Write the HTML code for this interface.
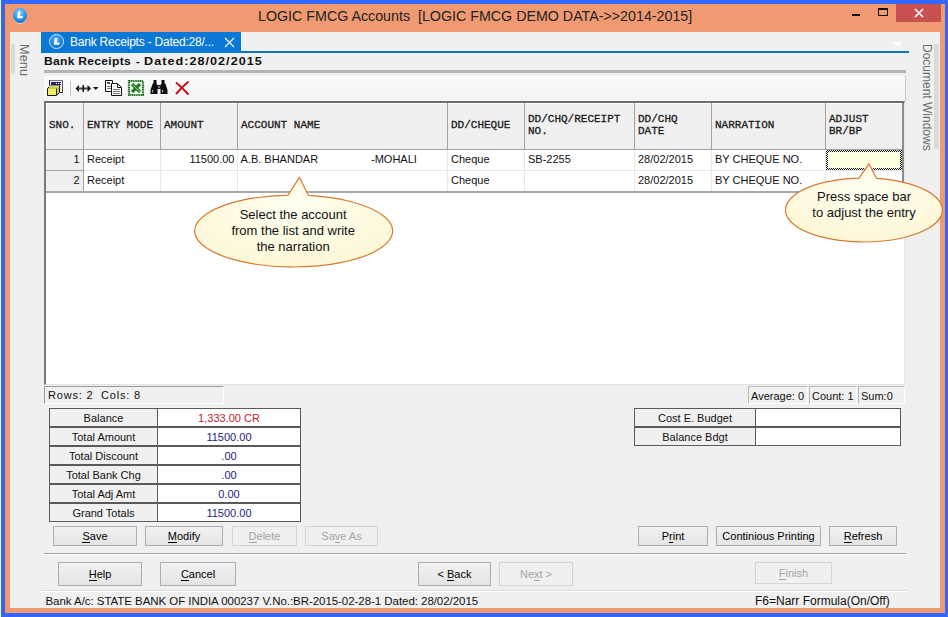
<!DOCTYPE html>
<html><head><meta charset="utf-8">
<style>
*{margin:0;padding:0;box-sizing:border-box}
html,body{width:948px;height:617px;overflow:hidden;background:#3366fb}
body{position:relative;font-family:"Liberation Sans",sans-serif;font-size:11px;color:#000}
.a{position:absolute}
.mono{font-family:"Liberation Mono",monospace;font-weight:normal;font-size:11px;color:#1a1a1a;-webkit-text-stroke:0.3px #1a1a1a}
.hd{position:absolute;top:103px;height:46px;display:flex;align-items:center;padding-left:3px;line-height:12px}
.cell{position:absolute;height:21px;line-height:21px;white-space:nowrap;font-size:11.5px}
.btn{position:absolute;height:20px;border:1px solid #adadad;background:linear-gradient(#f2f2f2,#e4e4e4);text-align:center;font-size:12px;line-height:17px;color:#000}
.btn.dis{border-color:#d5d5d5;background:#f0f0f0;color:#a3a3a3}
.lbl{position:absolute;border:1px solid #5a5a5a;background:#f0f0f0;text-align:center;font-size:12px;line-height:18px;height:19px;color:#111}
.val{position:absolute;border:1px solid #5a5a5a;background:#fff;text-align:center;font-size:12px;line-height:18px;height:19px;color:#1c1c84}
u{text-decoration:none;border-bottom:1px solid currentColor;line-height:11px;display:inline-block}
</style></head><body>
<!-- window frame -->
<div class="a" style="left:0;top:0;width:1px;height:617px;background:#effcff"></div>
<div class="a" style="left:4px;top:4px;width:941px;height:609px;background:#5a5ab0"></div>
<div class="a" style="left:5px;top:4px;width:940px;height:609px;background:#f09a72"></div>
<!-- title -->
<div class="a" style="left:13px;top:8px;width:14px;height:15px;border-radius:50%;background:radial-gradient(circle at 45% 30%,#8fd4ff 0,#2a94ec 50%,#0a5cc0 100%);box-shadow:0 1px 0 rgba(255,255,255,0.5)"></div>
<svg class="a" style="left:15px;top:10px" width="10" height="10" viewBox="0 0 10 10"><path d="M3.2 1.5H5.8L4.9 6H8L7.6 8.2H2Z" fill="#fff"/></svg>
<div class="a" style="left:258px;top:7px;font-size:15px;line-height:18px;color:#222;white-space:nowrap;transform-origin:0 0;transform:scaleX(0.95)">LOGIC FMCG Accounts&nbsp; [LOGIC FMCG DEMO DATA-&gt;&gt;2014-2015]</div>
<div class="a" style="left:852px;top:14px;width:8px;height:2px;background:#111"></div>
<div class="a" style="left:878px;top:8px;width:10px;height:8px;border:1px solid #111;border-top-width:2px"></div>
<div class="a" style="left:896px;top:4px;width:45px;height:18px;background:#c75050"></div>
<svg class="a" style="left:913px;top:8px" width="12" height="10" viewBox="0 0 12 10"><path d="M2 1L10 9M10 1L2 9" stroke="#fff" stroke-width="1.6"/></svg>
<!-- content panel -->
<div class="a" style="left:10px;top:32px;width:930px;height:576px;background:#f0f0f0"></div>
<!-- menu sidebar -->
<div class="a" style="left:11px;top:44px;width:4px;height:30px;background:#dadada"></div>
<div class="a" style="left:31px;top:44px;transform-origin:0 0;transform:rotate(90deg);font-size:12.8px;line-height:13px;color:#6a6a6a;white-space:nowrap">Menu</div>
<!-- document windows sidebar -->
<div class="a" style="left:934px;top:44px;width:5px;height:105px;background:#dadada"></div>
<div class="a" style="left:933px;top:44px;transform-origin:0 0;transform:rotate(90deg);font-size:12px;line-height:13px;color:#6a6a6a;white-space:nowrap">Document Windows</div>

<!-- tab strip -->
<div class="a" style="left:241px;top:50px;width:668px;height:1px;background:#d6f4ff"></div>
<div class="a" style="left:41px;top:51px;width:868px;height:2px;background:#1f6fae"></div>
<div class="a" style="left:41px;top:53px;width:868px;height:1px;background:#dff6ff"></div>
<div class="a" style="left:41px;top:32px;width:200px;height:21px;background:#0a78d4"></div>
<div class="a" style="left:49px;top:34px;width:15px;height:15px;border-radius:50%;border:1px solid #d8eeff;background:radial-gradient(circle at 45% 35%,#5cb8f8 0,#1a80e0 55%,#0a5cc0 100%)"></div>
<svg class="a" style="left:52px;top:37px" width="9" height="9" viewBox="0 0 9 9"><path d="M3 1H5.5L4.6 5.6H7.6L7.2 7.8H1.8Z" fill="#fff"/></svg>
<div class="a" style="left:70px;top:35px;font-size:12px;letter-spacing:-0.22px;line-height:14px;color:#fff;white-space:nowrap">Bank Receipts - Dated:28/...</div>
<svg class="a" style="left:224px;top:37px" width="11" height="11" viewBox="0 0 11 11"><path d="M1 1L10 10M10 1L1 10" stroke="#e8f4ff" stroke-width="1.3"/></svg>
<svg class="a" style="left:893px;top:42px" width="10" height="5" viewBox="0 0 10 5"><path d="M0 0H10L5 5Z" fill="#fff"/></svg>
<!-- form title -->
<div class="a" style="left:43.6px;top:53px;font-size:11px;font-weight:bold;letter-spacing:0.25px;line-height:16px;color:#111;white-space:nowrap;transform-origin:0 0;transform:scaleX(1.1)">Bank Receipts</div>
<div class="a" style="left:136px;top:53px;font-size:11px;font-weight:bold;line-height:16px;color:#111;white-space:nowrap">-</div>
<div class="a" style="left:143.9px;top:53px;font-size:11px;font-weight:bold;letter-spacing:0.9px;line-height:16px;color:#111;white-space:nowrap;transform-origin:0 0;transform:scaleX(1.146)">Dated:28/02/2015</div>
<div class="a" style="left:44px;top:70px;width:862px;height:3px;background:#b4b4b4"></div>
<!-- toolbar -->
<div class="a" style="left:44px;top:76px;width:861px;height:25px;border-radius:3px 3px 0 0;background:linear-gradient(#fbfbfb,#f4f4f4);box-shadow:1px 0 0 #c8c8c8"></div>

<!-- grid -->
<div class="a" style="left:44px;top:101px;width:861px;height:284px;background:#fff;border-top:2px solid #6e6e6e;border-left:2px solid #7a7a7a;border-right:1px solid #e6e6e6;border-bottom:1px solid #e3e3e3"></div>
<div class="a" style="left:46px;top:103px;width:857px;height:46px;background:#f0f0f0;border-top:1px solid #fff;border-left:1px solid #fff"></div>
<div class="a" style="left:46px;top:149px;width:857px;height:1px;background:#a0a0a0"></div>
<div class="a" style="left:46px;top:150px;width:37px;height:41px;background:#f0f0f0"></div>
<div class="a" style="left:46px;top:170px;width:37px;height:1px;background:#a0a0a0"></div>
<div class="a" style="left:84px;top:170px;width:819px;height:1px;background:#e6e6e6"></div>
<div class="a" style="left:46px;top:191px;width:857px;height:2px;background:#a8a8a8"></div>
<div class="a" style="left:83px;top:103px;width:1px;height:46px;background:#a0a0a0"></div>
<div class="a" style="left:83px;top:150px;width:1px;height:41px;background:#a0a0a0"></div>
<div class="a" style="left:160px;top:103px;width:1px;height:46px;background:#a0a0a0"></div>
<div class="a" style="left:160px;top:150px;width:1px;height:41px;background:#e8e8e8"></div>
<div class="a" style="left:237px;top:103px;width:1px;height:46px;background:#a0a0a0"></div>
<div class="a" style="left:237px;top:150px;width:1px;height:41px;background:#e8e8e8"></div>
<div class="a" style="left:447px;top:103px;width:1px;height:46px;background:#a0a0a0"></div>
<div class="a" style="left:447px;top:150px;width:1px;height:41px;background:#e8e8e8"></div>
<div class="a" style="left:524px;top:103px;width:1px;height:46px;background:#a0a0a0"></div>
<div class="a" style="left:524px;top:150px;width:1px;height:41px;background:#e8e8e8"></div>
<div class="a" style="left:634px;top:103px;width:1px;height:46px;background:#a0a0a0"></div>
<div class="a" style="left:634px;top:150px;width:1px;height:41px;background:#e8e8e8"></div>
<div class="a" style="left:711px;top:103px;width:1px;height:46px;background:#a0a0a0"></div>
<div class="a" style="left:711px;top:150px;width:1px;height:41px;background:#e8e8e8"></div>
<div class="a" style="left:825px;top:103px;width:1px;height:46px;background:#a0a0a0"></div>
<div class="a" style="left:825px;top:150px;width:1px;height:41px;background:#e8e8e8"></div>
<div class="a" style="left:902px;top:103px;width:2px;height:88px;background:#8c8c8c"></div>
<div class="a mono" style="left:49px;top:120px;line-height:11.5px;white-space:nowrap">SNO.</div>
<div class="a mono" style="left:87px;top:120px;line-height:11.5px;white-space:nowrap">ENTRY MODE</div>
<div class="a mono" style="left:164px;top:120px;line-height:11.5px;white-space:nowrap">AMOUNT</div>
<div class="a mono" style="left:241px;top:120px;line-height:11.5px;white-space:nowrap">ACCOUNT NAME</div>
<div class="a mono" style="left:451px;top:120px;line-height:11.5px;white-space:nowrap">DD/CHEQUE</div>
<div class="a mono" style="left:528px;top:114px;line-height:11.5px;white-space:nowrap">DD/CHQ/RECEIPT<br>NO.</div>
<div class="a mono" style="left:638px;top:114px;line-height:11.5px;white-space:nowrap">DD/CHQ<br>DATE</div>
<div class="a mono" style="left:715px;top:120px;line-height:11.5px;white-space:nowrap">NARRATION</div>
<div class="a mono" style="left:829px;top:114px;line-height:11.5px;white-space:nowrap">ADJUST<br>BR/BP</div>
<div class="a" style="left:-20.5px;width:100px;top:153px;text-align:right;font-size:11px;line-height:13px;white-space:nowrap;color:#111">1</div>
<div class="a" style="left:87px;top:153px;font-size:11px;line-height:13px;white-space:nowrap;color:#111">Receipt</div>
<div class="a" style="left:451px;top:153px;font-size:11px;line-height:13px;white-space:nowrap;color:#111">Cheque</div>
<div class="a" style="left:638px;top:153px;font-size:11px;line-height:13px;white-space:nowrap;color:#111">28/02/2015</div>
<div class="a" style="left:715px;top:153px;font-size:11px;line-height:13px;white-space:nowrap;color:#111">BY CHEQUE NO.</div>
<div class="a" style="left:-20.5px;width:100px;top:174px;text-align:right;font-size:11px;line-height:13px;white-space:nowrap;color:#111">2</div>
<div class="a" style="left:87px;top:174px;font-size:11px;line-height:13px;white-space:nowrap;color:#111">Receipt</div>
<div class="a" style="left:451px;top:174px;font-size:11px;line-height:13px;white-space:nowrap;color:#111">Cheque</div>
<div class="a" style="left:638px;top:174px;font-size:11px;line-height:13px;white-space:nowrap;color:#111">28/02/2015</div>
<div class="a" style="left:715px;top:174px;font-size:11px;line-height:13px;white-space:nowrap;color:#111">BY CHEQUE NO.</div>
<div class="a" style="left:134.5px;width:100px;top:153px;text-align:right;font-size:11px;line-height:13px;white-space:nowrap;color:#111">11500.00</div>
<div class="a" style="left:240.5px;top:153px;font-size:11px;line-height:13px;white-space:nowrap;color:#111">A.B. BHANDAR</div>
<div class="a" style="left:371px;top:153px;font-size:11px;line-height:13px;white-space:nowrap;color:#111">-MOHALI</div>
<div class="a" style="left:528px;top:153px;font-size:11px;line-height:13px;white-space:nowrap;color:#111">SB-2255</div>
<div class="a" style="left:826px;top:150px;width:76px;height:20px;background:repeating-conic-gradient(#111 0 25%,#fff 0 50%) 0 0/2px 2px"></div><div class="a" style="left:828px;top:152px;width:72px;height:16px;background:#fffde0"></div>
<!-- toolbar icons -->
<svg class="a" style="left:46px;top:78px" width="20" height="20" viewBox="0 0 20 20">
 <rect x="3.5" y="2.5" width="13" height="12" fill="#ececec" stroke="#2a2a2a"/>
 <rect x="4" y="2" width="13" height="1" fill="#777"/>
 <rect x="5" y="4" width="10" height="3" fill="#1a2680"/>
 <rect x="10" y="5" width="1" height="1" fill="#fff"/><rect x="12" y="5" width="1" height="1" fill="#fff"/><rect x="14" y="5" width="1" height="1" fill="#fff"/>
 <rect x="16" y="3" width="1" height="12" fill="#555"/>
 <path d="M1.5 10.5L4.5 7.5H13.5V14.5L10.5 17.5H1.5Z" fill="#c9c94a" stroke="#1a1a1a"/>
 <rect x="2" y="11" width="8" height="6" fill="#eeee66"/>
 <path d="M10.5 10.5V17.5" stroke="#333"/>
 <path d="M3 8H13" stroke="#f4f4a0"/>
</svg>
<div class="a" style="left:70px;top:81px;width:1px;height:15px;background:#c4c4c4"></div>
<svg class="a" style="left:75px;top:84px" width="24" height="9" viewBox="0 0 24 9">
 <path d="M0.5 4.5L4 1V8Z M16 4.5L12.5 1V8Z" fill="#111"/>
 <rect x="3" y="3.5" width="10" height="2" fill="#444"/>
 <rect x="7.5" y="1" width="1.5" height="7" fill="#111"/>
 <path d="M18 3H23.5L20.75 6Z" fill="#111"/>
</svg>
<svg class="a" style="left:104px;top:79px" width="19" height="18" viewBox="0 0 19 18">
 <path d="M1.5 1.5H8.5V12.5H1.5Z" fill="#fff" stroke="#111"/>
 <rect x="3" y="3" width="3" height="2" fill="#555"/>
 <path d="M3 7.5H7M3 9.5H7" stroke="#777"/>
 <path d="M7.5 4.5H13.5L17.5 8.5V16.5H7.5Z" fill="#fff" stroke="#111"/>
 <path d="M13.5 4.5V8.5H17.5" fill="none" stroke="#111"/>
 <path d="M9 10.5H16M9 12.5H16M9 14.5H16" stroke="#777"/>
</svg>
<svg class="a" style="left:127px;top:79px" width="18" height="18" viewBox="0 0 18 18">
 <rect x="2" y="2" width="14" height="14" fill="#fff" stroke="#1f741f" stroke-width="2.2" stroke-dasharray="1.3 0.5"/>
 <path d="M5 5L13 13M13 5L5 13" stroke="#237a23" stroke-width="3.2"/>
 <path d="M5.5 5.5L12.5 12.5" stroke="#d8efd8" stroke-width="0.7"/>
</svg>
<svg class="a" style="left:150px;top:80px" width="18" height="15" viewBox="0 0 18 15">
 <path d="M3.5 0H6.5V3.5L7.5 5V14H0.5V10L2.5 4L3.5 3Z" fill="#0d0d0d"/>
 <path d="M11.5 0H14.5V3L15.5 4L17.5 10V14H10.5V5L11.5 3.5Z" fill="#0d0d0d"/>
 <rect x="7" y="5" width="4" height="4" fill="#1a1a1a"/>
 <rect x="2" y="10" width="1.2" height="2.5" fill="#aaa"/><rect x="12" y="10" width="1.2" height="2.5" fill="#aaa"/>
 <rect x="8" y="6" width="2" height="2" fill="#777"/>
</svg>
<svg class="a" style="left:174px;top:80px" width="16" height="16" viewBox="0 0 16 16">
 <path d="M2 2.5Q8 7.5 14.5 14.5M14.5 1.5Q8 7 2 14" fill="none" stroke="#c01018" stroke-width="2"/>
</svg>
<!-- bubbles -->
<svg class="a" style="left:0;top:0" width="948" height="617" viewBox="0 0 948 617">
 <defs>
  <radialGradient id="bg1" cx="50%" cy="35%" r="65%"><stop offset="0" stop-color="#fffff0"/><stop offset="1" stop-color="#fdf7d6"/></radialGradient>
 </defs>
 <path d="M308.5 195.4 L299.5 177.5 L288 195.05 A99 36 0 1 0 308.5 195.4 Z" fill="url(#bg1)" stroke="#d77a32" stroke-width="1.2"/>
 <path d="M876.5 178.41 L869 164 L859 178.06 A78.5 32 0 1 0 876.5 178.41 Z" fill="url(#bg1)" stroke="#d77a32" stroke-width="1.2"/>
</svg>
<div class="a" style="left:193.2px;top:207px;width:200px;text-align:center;font-size:13px;line-height:16px;color:#111">Select the account<br>from the list and write<br>the narration</div>
<div class="a" style="left:786px;top:189px;width:156px;text-align:center;font-size:13px;line-height:16px;color:#111">Press space bar<br>to adjust the entry</div>

<!-- status bar -->
<div class="a" style="left:44px;top:386px;width:180px;height:18px;border-top:1px solid #9a9a9a;border-left:1px solid #9a9a9a;border-right:1px solid #fff;border-bottom:1px solid #fff"></div>
<div class="a" style="left:48px;top:389px;font-size:11px;letter-spacing:0.8px;line-height:13px;color:#111;white-space:nowrap">Rows: 2&nbsp; Cols: 8</div>
<div class="a" style="left:748px;top:386px;width:60px;height:18px;border-top:1px solid #b8b8b8;border-left:1px solid #b8b8b8;border-right:1px solid #fff;border-bottom:1px solid #fff"></div>
<div class="a" style="left:809px;top:386px;width:48px;height:18px;border-top:1px solid #b8b8b8;border-left:1px solid #b8b8b8;border-right:1px solid #fff;border-bottom:1px solid #fff"></div>
<div class="a" style="left:858px;top:386px;width:47px;height:18px;border-top:1px solid #b8b8b8;border-left:1px solid #b8b8b8;border-right:1px solid #fff;border-bottom:1px solid #fff"></div>
<div class="a" style="left:751px;top:390px;font-size:11px;line-height:13px;color:#111;white-space:nowrap">Average: 0</div>
<div class="a" style="left:812px;top:390px;font-size:11px;line-height:13px;color:#111;white-space:nowrap">Count: 1</div>
<div class="a" style="left:861px;top:390px;font-size:11px;line-height:13px;color:#111;white-space:nowrap">Sum:0</div>

<!-- summary -->
<div class="lbl" style="left:49px;top:408px;width:109px;font-size:11px">Balance</div>
<div class="val" style="left:157px;top:408px;width:144px;font-size:11px;color:#c0222a">1,333.00 CR</div>
<div class="lbl" style="left:49px;top:427px;width:109px;font-size:11px">Total Amount</div>
<div class="val" style="left:157px;top:427px;width:144px;font-size:11px;">11500.00</div>
<div class="lbl" style="left:49px;top:446px;width:109px;font-size:11px">Total Discount</div>
<div class="val" style="left:157px;top:446px;width:144px;font-size:11px;">.00</div>
<div class="lbl" style="left:49px;top:465px;width:109px;font-size:11px">Total Bank Chg</div>
<div class="val" style="left:157px;top:465px;width:144px;font-size:11px;">.00</div>
<div class="lbl" style="left:49px;top:484px;width:109px;font-size:11px">Total Adj Amt</div>
<div class="val" style="left:157px;top:484px;width:144px;font-size:11px;">0.00</div>
<div class="lbl" style="left:49px;top:503px;width:109px;font-size:11px">Grand Totals</div>
<div class="val" style="left:157px;top:503px;width:144px;font-size:11px;">11500.00</div>
<div class="lbl" style="left:634px;top:408px;width:122px;font-size:11px">Cost E. Budget</div>
<div class="val" style="left:755px;top:408px;width:146px"></div>
<div class="lbl" style="left:634px;top:427px;width:122px;font-size:11px">Balance Bdgt</div>
<div class="val" style="left:755px;top:427px;width:146px"></div>
<!-- buttons -->
<div class="btn" style="left:53px;top:526px;width:84px;height:20px;font-size:11px;line-height:18px"><u>S</u>ave</div>
<div class="btn" style="left:145px;top:526px;width:78px;height:20px;font-size:11px;line-height:18px"><u>M</u>odify</div>
<div class="btn dis" style="left:232px;top:526px;width:65px;height:20px;font-size:11px;line-height:18px"><u>D</u>elete</div>
<div class="btn dis" style="left:305px;top:526px;width:73px;height:20px;font-size:11px;line-height:18px">Sa<u>v</u>e As</div>
<div class="btn" style="left:638px;top:526px;width:70px;height:20px;font-size:11px;line-height:18px">P<u>r</u>int</div>
<div class="btn" style="left:716px;top:526px;width:105px;height:20px;font-size:11px;line-height:18px">Continious Printing</div>
<div class="btn" style="left:829px;top:526px;width:68px;height:20px;font-size:11px;line-height:18px"><u>R</u>efresh</div>
<div class="a" style="left:44px;top:553px;width:862px;height:1px;background:#a0a0a0"></div><div class="a" style="left:44px;top:554px;width:862px;height:1px;background:#fff"></div>
<div class="btn" style="left:58px;top:562px;width:84px;height:24px;font-size:11px;line-height:22px"><u>H</u>elp</div>
<div class="btn" style="left:160px;top:562px;width:76px;height:24px;font-size:11px;line-height:22px"><u>C</u>ancel</div>
<div class="btn" style="left:418px;top:562px;width:73px;height:24px;font-size:11px;line-height:22px">&lt; <u>B</u>ack</div>
<div class="btn dis" style="left:499px;top:562px;width:74px;height:24px;font-size:11px;line-height:22px">Ne<u>x</u>t &gt;</div>
<div class="btn dis" style="left:755px;top:562px;width:77px;height:22px;font-size:11px;line-height:20px"><u>F</u>inish</div>
<div class="a" style="left:41px;top:590px;width:867px;height:1px;background:#dcdcdc"></div><div class="a" style="left:41px;top:591px;width:867px;height:1px;background:#fff"></div>
<div class="a" style="left:45.5px;top:594px;font-size:11.5px;letter-spacing:-0.05px;line-height:14px;color:#111;white-space:nowrap">Bank A/c: STATE BANK OF INDIA 000237 V.No.:BR-2015-02-28-1 Dated: 28/02/2015</div>
<div class="a" style="left:755px;top:594px;font-size:12px;line-height:14px;color:#111;white-space:nowrap">F6=Narr Formula(On/Off)</div>
</body></html>
